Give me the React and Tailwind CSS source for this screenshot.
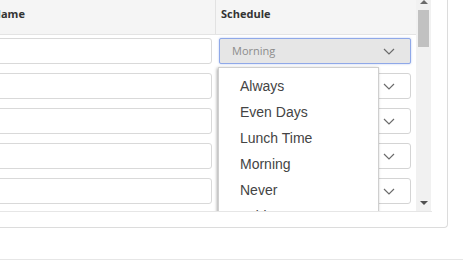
export default function App() {
  const rows = [0, 1, 2, 3, 4];
  const items = ["Always", "Even Days", "Lunch Time", "Morning", "Never", "Odd Days"];
  const Chevron = () => (
    <svg width="12" height="7" viewBox="0 0 12 7" className="shrink-0">
      <path d="M1 1 L6 6 L11 1" fill="none" stroke="#6b6b6b" strokeWidth="1.2" />
    </svg>
  );
  return (
    <div className="w-[463px] h-[267px] bg-white overflow-hidden" style={{ fontFamily: '"Open Sans", sans-serif' }}>
      <div className="w-[448px] h-[228px] border-r border-b border-[#dcdcdc] rounded-br-[4px]">
        <div className="w-[432px] h-[212px] border-b border-[#e6e6e6] flex overflow-hidden">
          <div className="w-[416px] h-full overflow-hidden relative">
            <div className="ml-[-16px] w-[432px]">
              <div className="flex h-[35px] bg-[#f5f5f5] border-b border-[#e4e4e4]">
                <div className="w-[232px] border-r border-[#e2e2e2] pl-[8px] pt-[6px] text-[11px] font-bold text-[#333]">Name</div>
                <div className="flex-1 pl-[5px] pt-[6px] text-[11px] font-bold text-[#333]">Schedule</div>
              </div>
              {rows.map((r) => (
                <div key={r} className="flex h-[35px] pt-[3px]">
                  <div className="w-[232px] pl-[4px] pr-[4px]">
                    <div className="h-[26px] border border-[#d9d9d9] rounded-[3px] bg-white" />
                  </div>
                  <div className="flex-1 pl-[3px] pr-[5px]">
                    {r === 0 ? (
                      <div className="h-[26px] border border-[#8fa8e8] rounded-[2px] bg-[#e6e6e6] shadow-[0_0_2px_rgba(100,140,230,0.5)] flex items-center justify-between pl-[12px] pr-[15px]">
                        <span className="text-[11px] text-[#8c8c8c]">Morning</span>
                        <Chevron />
                      </div>
                    ) : (
                      <div className="h-[26px] border border-[#d4d4d4] rounded-[3px] bg-white flex items-center justify-end pr-[15px]">
                        <Chevron />
                      </div>
                    )}
                  </div>
                </div>
              ))}
            </div>
            <div className="absolute left-[218px] top-[67px] w-[161px] h-[170px] bg-white border border-[#cfcfcf] shadow-[-1px_1px_3px_rgba(0,0,0,0.35)] pt-[5px]" style={{ fontFamily: '"Liberation Sans", Arial, sans-serif' }}>
              {items.map((it) => (
                <div key={it} className="h-[26px] pl-[21px] flex items-center text-[14px] text-[#444]">{it}</div>
              ))}
            </div>
          </div>
          <div className="w-[15px] h-full bg-[#f1f1f1] relative">
            <svg width="8" height="5" viewBox="0 0 8 5" className="absolute left-[4px] top-[-1px]">
              <path d="M0 5 L4 1 L8 5 Z" fill="#6a6a6a" />
            </svg>
            <div className="absolute left-[2px] top-[10px] w-[11px] h-[37px] bg-[#c1c1c1]" />
            <svg width="8" height="4" viewBox="0 0 8 4" className="absolute left-[4px] top-[201px]">
              <path d="M0 0 L8 0 L4 4 Z" fill="#505050" />
            </svg>
          </div>
        </div>
      </div>
      <div className="mt-[31px] w-full border-t border-[#e6e6e6]" />
    </div>
  );
}
